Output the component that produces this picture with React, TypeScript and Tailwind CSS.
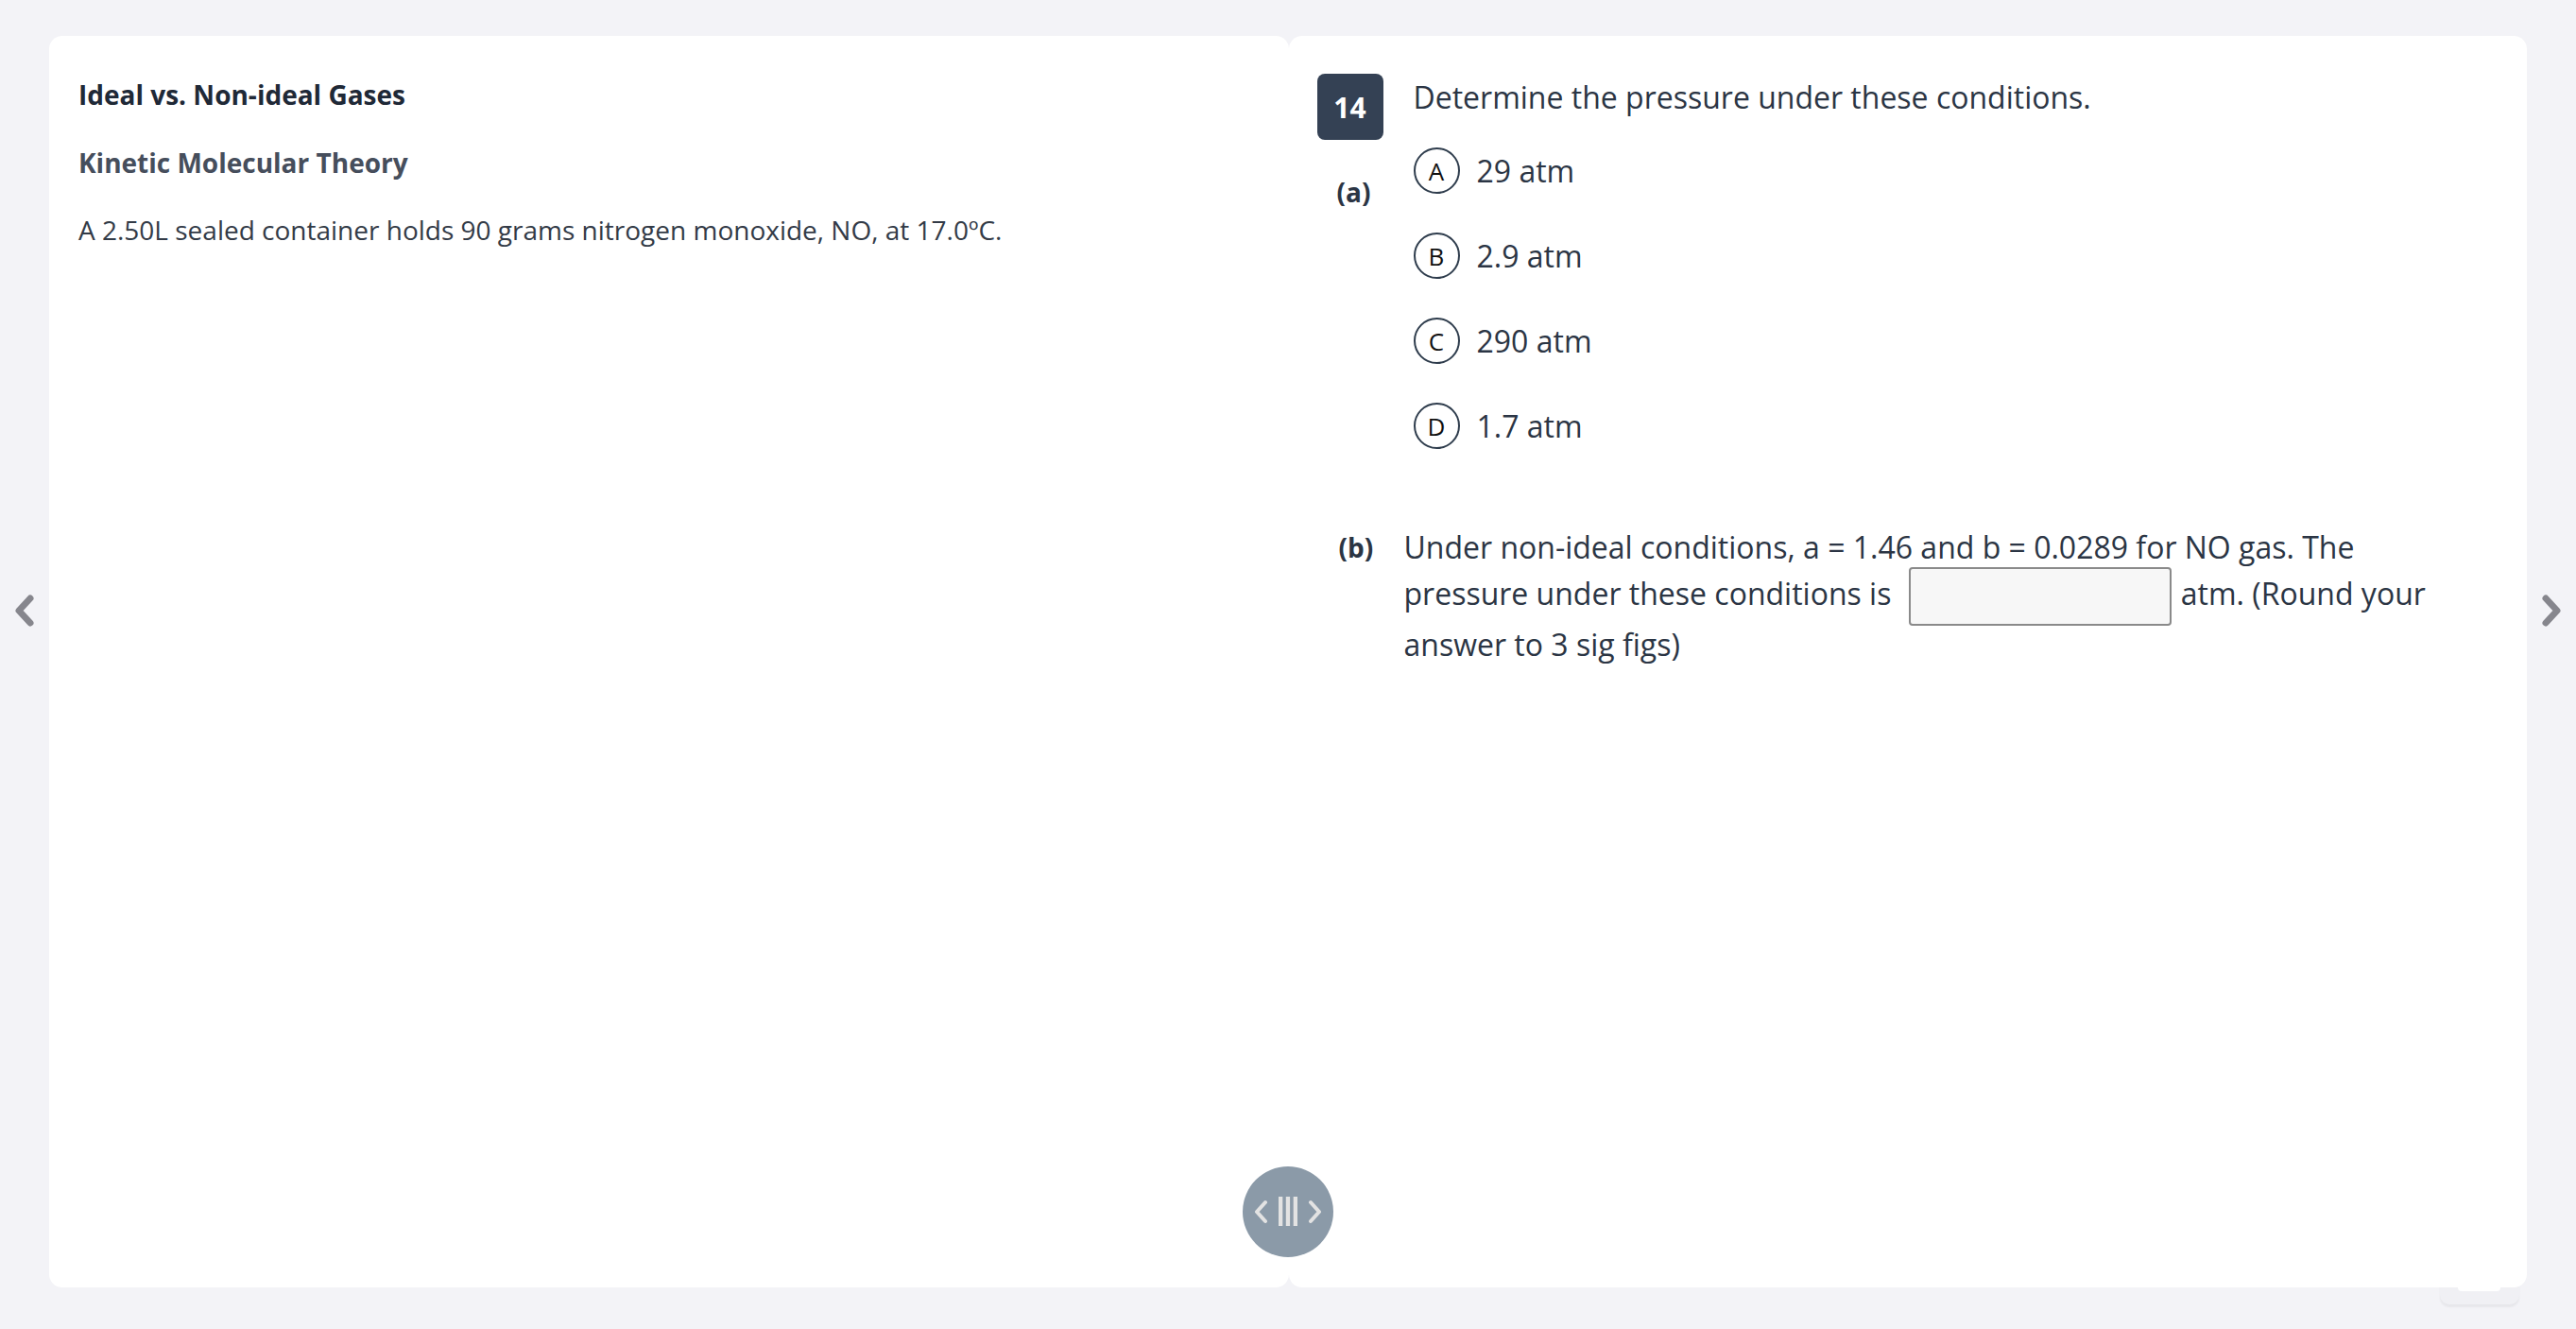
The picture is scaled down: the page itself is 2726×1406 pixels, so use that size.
import React from "react";

function SideChevron({ dir }: { dir: "left" | "right" }) {
  return (
    <svg width="24" height="36" viewBox="0 0 24 36" className="block">
      <polyline
        points={dir === "left" ? "18,5 6,18 18,31" : "6,5 18,18 6,31"}
        fill="none"
        stroke="#86868d"
        strokeWidth="7"
        strokeLinecap="round"
        strokeLinejoin="round"
      />
    </svg>
  );
}

function Option({ letter, text }: { letter: string; text: string }) {
  return (
    <div className="flex items-center gap-[18px] h-[49px]">
      <div className="w-[49px] h-[49px] rounded-full border-2 border-[#2f3d4d] flex items-center justify-center text-[26px] leading-none font-medium text-[#111111] shrink-0">
        {letter}
      </div>
      <span className="text-[32px] leading-[47px] text-[#2b3544]">{text}</span>
    </div>
  );
}

export default function App() {
  return (
    <div
      className="w-full min-h-screen bg-[#f3f3f7] flex"
      style={{ fontFamily: '"Open Sans", "Noto Sans", sans-serif' }}
    >
      {/* left gutter */}
      <div className="w-[52px] shrink-0 flex justify-center pt-[628px]">
        <SideChevron dir="left" />
      </div>

      {/* cards */}
      <div className="relative flex-1 flex mt-[38px] mb-[44px] h-[1324px]">
        {/* bottom right tab behind card */}
        <div className="absolute right-[8px] bottom-[-18px] w-[84px] h-[30px] rounded-[10px] bg-[#f0f0f4] shadow-[0_3px_2px_rgba(0,0,0,0.05)]" />

        <div className="relative z-10 flex-1 bg-white rounded-[14px] pl-[31px] pt-[41px]">
          <h1 className="text-[28px] leading-[42px] font-bold text-[#1f2937]">
            Ideal vs. Non-ideal Gases
          </h1>
          <h2 className="mt-[30px] text-[28px] leading-[42px] font-bold text-[#464e5c]">
            Kinetic Molecular Theory
          </h2>
          <p className="mt-[29px] text-[28px] leading-[42px] text-[#333b47]">
            A 2.50L sealed container holds 90 grams nitrogen monoxide, NO, at 17.0ºC.
          </p>
        </div>

        <div className="relative z-10 flex-1 bg-white rounded-[14px] pl-[30px] pt-[40px]">
          <div className="flex items-start gap-[32px]">
            <div className="w-[70px] h-[70px] rounded-[8px] bg-[#344154] text-white font-bold text-[30px] flex items-center justify-center shrink-0">
              14
            </div>
            <p className="mt-[1px] text-[32px] leading-[47px] text-[#2b3544]">
              Determine the pressure under these conditions.
            </p>
          </div>

          <div className="flex items-start gap-[32px] mt-[8px]">
            <div className="w-[70px] shrink-0 pl-[21px] pt-[26px] text-[28px] leading-[42px] font-bold text-[#2b3544]">
              (a)
            </div>
            <div className="flex flex-col gap-[41px]">
              <Option letter="A" text="29 atm" />
              <Option letter="B" text="2.9 atm" />
              <Option letter="C" text="290 atm" />
              <Option letter="D" text="1.7 atm" />
            </div>
          </div>

          <div className="flex items-start mt-[79px] pl-[23px]">
            <div className="w-[69px] shrink-0 text-[28px] leading-[50px] font-bold text-[#2b3544]">
              (b)
            </div>
            <p className="w-[1112px] text-[32px] leading-[49px] text-[#2b3544]">
              Under non-ideal conditions, a = 1.46 and b = 0.0289 for NO gas. The pressure under these conditions is{" "}
              <input
                type="text"
                aria-label="answer"
                className="inline-block align-middle w-[278px] h-[62px] -my-[5px] ml-[10px] mr-[10px] border-2 border-[#8a8a8a] rounded-[4px] bg-[#f7f7f7] outline-none"
              />
              atm. (Round your answer to 3 sig figs)
            </p>
          </div>
        </div>

        {/* center handle */}
        <div className="absolute z-20 left-1/2 -translate-x-1/2 bottom-[32px] w-[96px] h-[96px] rounded-full bg-[#8b9aa8]">
          <svg width="96" height="96" viewBox="0 0 96 96" className="block">
            <polyline points="24,38 15,48 24,58" fill="none" stroke="#e3e3e3" strokeWidth="4" strokeLinecap="round" strokeLinejoin="round" />
            <rect x="38" y="32" width="4.3" height="31" fill="#e3e3e3" />
            <rect x="45.8" y="32" width="4.3" height="31" fill="#e3e3e3" />
            <rect x="53.7" y="32" width="4.3" height="31" fill="#e3e3e3" />
            <polyline points="72,38 81,48 72,58" fill="none" stroke="#e3e3e3" strokeWidth="4" strokeLinecap="round" strokeLinejoin="round" />
          </svg>
        </div>

        {/* small white nub under right card */}
        <div className="absolute z-10 right-[28px] bottom-[-4px] w-[45px] h-[8px] rounded-b-[4px] bg-white" />
      </div>

      {/* right gutter */}
      <div className="w-[52px] shrink-0 flex justify-center pt-[628px]">
        <SideChevron dir="right" />
      </div>
    </div>
  );
}
